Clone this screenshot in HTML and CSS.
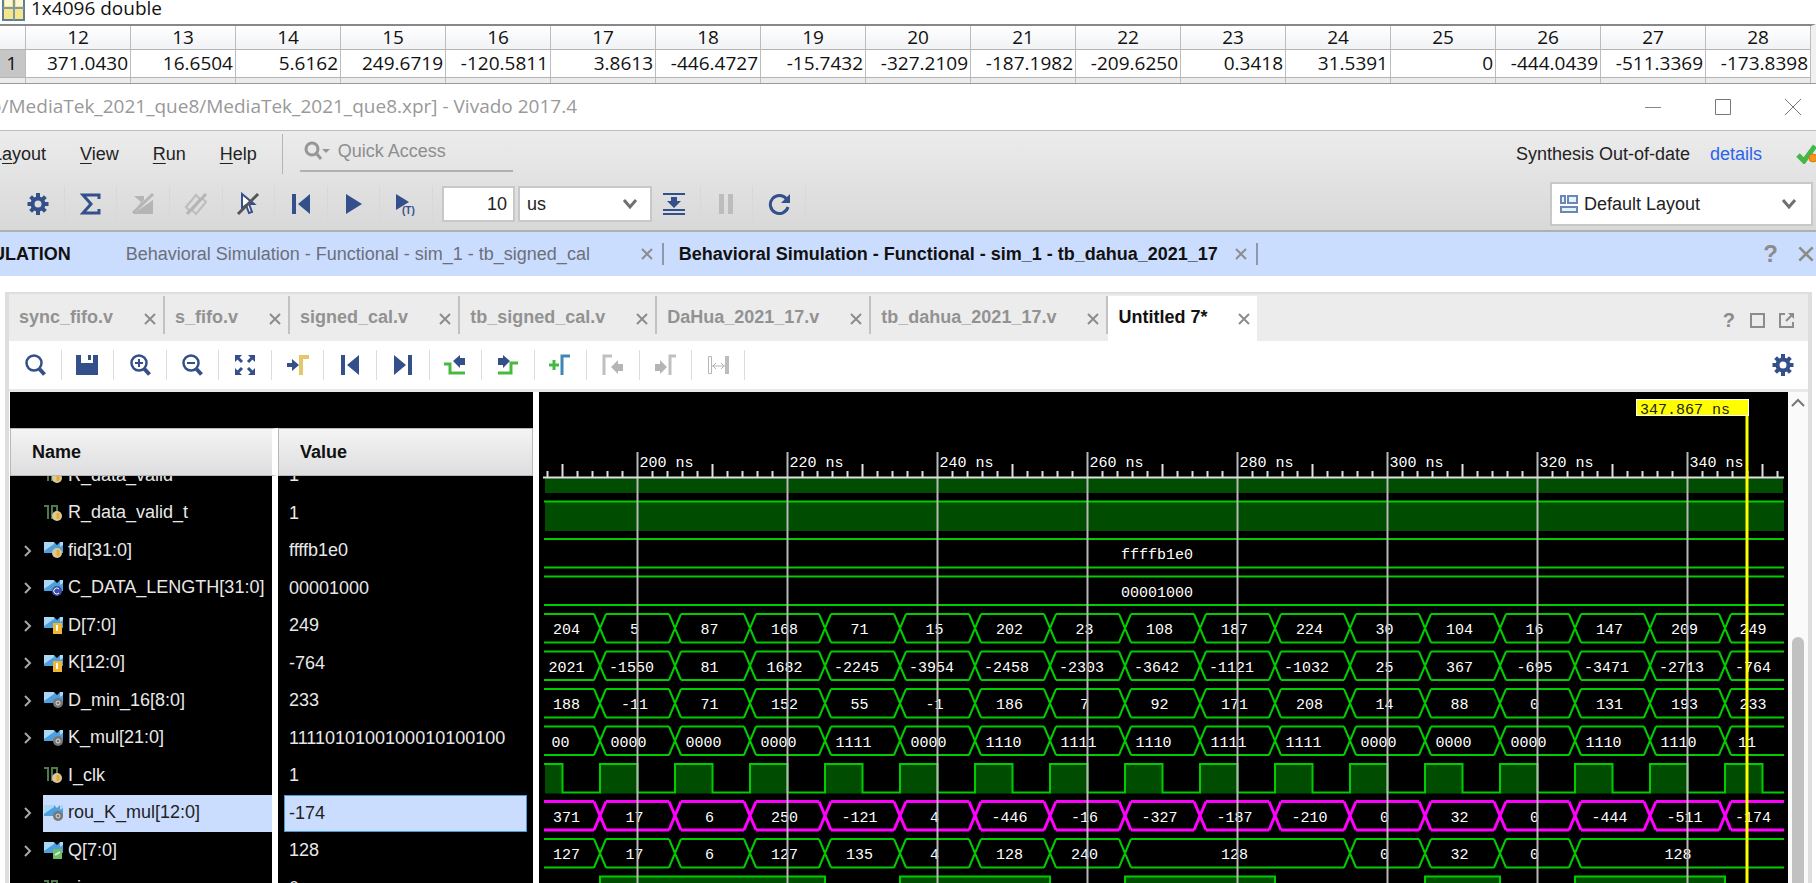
FILE: index.html
```html
<!DOCTYPE html>
<html lang="en">
<head>
    <meta charset="UTF-8">
    <meta name="viewport" content="width=device-width, initial-scale=1.0">
    <title>Vivado 2017.4</title>
    <link rel="stylesheet" href="styles.css">
</head>
<body>
<!-- Icons used more than once -->
<svg class="defs" width="0" height="0">
    <symbol id="gear" viewBox="0 0 24 24"><path fill="none" stroke="#34508a" stroke-width="4" d="M12 6.500a5.500 5.500 0 1 1 0 11a5.500 5.500 0 1 1 0-11"/><path stroke="#34508a" stroke-width="4" d="M12 1v4M12 19v4M1.500 12h4M18.500 12h4M4.600 4.600l3 3M16.400 16.400l3 3M4.600 19.400l3-3M16.400 7.600l3-3"/></symbol>
    <symbol id="close" viewBox="0 0 12 12"><path fill="none" stroke="#8c8c8c" stroke-width="2" d="M1 1l10 10M11 1L1 11"/></symbol>
    <symbol id="down" viewBox="0 0 16 12"><path fill="none" stroke="#707070" stroke-width="3" d="M2 2l6 7l6-7"/></symbol>
    <symbol id="first" viewBox="0 0 24 24"><path fill="#34508a" d="M3 2h4v20H3zM21 2v20L9 12z"/></symbol>
    <symbol id="lens" viewBox="0 0 24 24"><circle cx="11" cy="10" r="7.500" fill="none" stroke="#34508a" stroke-width="2.500"/><path stroke="#34508a" stroke-width="4" d="M16.500 16l5 5.500"/></symbol>
    <symbol id="bus" viewBox="0 0 19 18"><path fill="#4f9fdc" d="M0 1h10l3 3 3-3h3v11h-3l-3-3-3 3H0z"/><path fill="#a9d8f6" d="M0 1h10v2L0 10zM16 1h3v3l-3 2z"/></symbol>
    <symbol id="bit" viewBox="0 0 19 18"><path fill="none" stroke="#4f7a4a" stroke-width="2" d="M0 2h4v13M8 15V2h5v8"/></symbol>
</svg>

<!-- Matrix viewer -->
<section class="matrix">
    <div class="matrix-title">
        <svg width="24" height="22" viewBox="0 0 24 22"><path fill="#f6e68a" stroke="#5f7f98" stroke-width="2" d="M1-5h21v25H1z"/><path stroke="#8199a6" stroke-width="2" d="M12 0v20M1 8h21"/><path fill="#fdf8d2" d="M3 0h7v6H3zM14 0h7v6h-7z"/></svg>
        1x4096 double
    </div>
    <table class="matrix-table">
        <thead><tr id="matrixHead"><th class="corner"></th></tr></thead>
        <tbody>
            <tr id="matrixRow"><th class="row-no">1</th></tr>
            <tr id="matrixNext" class="next"><th></th></tr>
        </tbody>
    </table>
</section>

<!-- Title bar -->
<header class="titlebar">
    <div class="path"><span>o/MediaTek_2021_que8/MediaTek_2021_que8.xpr] - Vivado 2017.4</span></div>
    <div class="window-buttons">
        <button aria-label="Minimize"><svg width="16" height="16"><path stroke="#888" d="M0 8.500h16"/></svg></button>
        <button aria-label="Maximize"><svg width="16" height="16"><path fill="none" stroke="#777" d="M.5.5h15v15H.5z"/></svg></button>
        <button aria-label="Close"><svg width="16" height="16"><path stroke="#777" d="M0 0l16 16M16 0L0 16"/></svg></button>
    </div>
</header>

<!-- Menu and main toolbar -->
<div class="chrome">
    <div class="menubar">
        <nav>
            <a href="#">L<u>a</u>yout</a>
            <a href="#"><u>V</u>iew</a>
            <a href="#"><u>R</u>un</a>
            <a href="#"><u>H</u>elp</a>
        </nav>
        <label class="quick">
            <svg width="27" height="20" viewBox="0 0 27 20"><circle cx="8" cy="8" r="6" fill="none" stroke="#969696" stroke-width="3"/><path stroke="#969696" stroke-width="3" d="M12 12l5 6"/><path fill="#969696" d="M18 8h8l-4 4z"/></svg>
            <input type="text" placeholder="Quick Access" aria-label="Quick Access">
        </label>
        <div class="status">
            <span>Synthesis Out-of-date</span>
            <a href="#">details</a>
            <svg width="20" height="20" viewBox="0 0 20 20"><path fill="none" stroke="#45b649" stroke-width="5" d="M2 11l6 6L19 2"/><circle cx="17" cy="14" r="4" fill="#f7941d" stroke="#d9770a"/></svg>
        </div>
    </div>
    <div class="toolbar">
        <div class="run-tools">
            <button aria-label="Settings"><svg><use href="#gear"/></svg></button>
            <button aria-label="Sum"><svg viewBox="0 0 24 24"><path fill="none" stroke="#34508a" stroke-width="3" d="M21 7V3H5l8 9l-8 9h16v-4"/></svg></button>
            <button aria-label="Elaborate"><svg viewBox="0 0 24 24"><path fill="#b5b5b5" d="M3 4h10v4l-8 9l5-7zM2 22L22 8v14z"/><path stroke="#b5b5b5" stroke-width="3" d="M2 21L22 2"/></svg></button>
            <button aria-label="Clear marks"><svg viewBox="0 0 24 24"><path fill="none" stroke="#bdbdbd" stroke-width="2" d="M2 15L12 3l4 4L6 19zM8 18L18 6l4 4L12 22z"/><path stroke="#b5b5b5" stroke-width="3" d="M3 22L22 2"/></svg></button>
            <button aria-label="No selection"><svg viewBox="0 0 24 24"><path fill="#fff" stroke="#34508a" stroke-width="2" d="M6 2v14l4-3l3 8l3-1l-3-8h5z"/><path stroke="#555" stroke-width="3" d="M2 22L22 2"/></svg></button>
            <button aria-label="Restart"><svg><use href="#first"/></svg></button>
            <button aria-label="Run all"><svg viewBox="0 0 24 24"><path fill="#34508a" d="M4 2l16 10L4 22z"/></svg></button>
            <button aria-label="Run for time"><svg viewBox="0 0 24 24"><path fill="#34508a" d="M2 2l13 8L2 18z"/><text x="8" y="22" class="icon-text">(T)</text></svg></button>
        </div>
        <input class="run-time" type="text" value="10" aria-label="Run time">
        <div class="combo unit">
            <select aria-label="Time unit"><option>us</option><option>ns</option></select>
            <svg width="16" height="12"><use href="#down"/></svg>
        </div>
        <div class="sim-tools">
            <button aria-label="Step"><svg viewBox="0 0 24 24"><path stroke="#34508a" stroke-width="2" d="M1 2h22M1 18h22M1 22h22"/><path fill="#34508a" d="M9 5h6v4h4l-7 7l-7-7h4z"/></svg></button>
            <button aria-label="Break"><svg viewBox="0 0 24 24"><path fill="#bcbcbc" d="M5 2h5v20H5zM14 2h5v20h-5z"/></svg></button>
            <button aria-label="Relaunch"><svg viewBox="0 0 24 24"><path fill="none" stroke="#34508a" stroke-width="3" d="M19.500 7A9 9 0 1 0 21 15"/><path fill="#34508a" d="M23 2v9h-9z"/></svg></button>
        </div>
        <div class="combo layout">
            <svg width="18" height="18"><path fill="#e4f4fc" stroke="#6b87b5" stroke-width="2" d="M1 1h4v7H1zM8 1h9v7H8zM1 12h16v5H1z"/></svg>
            <select aria-label="Layout"><option>Default Layout</option></select>
            <svg width="16" height="12"><use href="#down"/></svg>
        </div>
    </div>
</div>

<!-- Simulation tabs -->
<div class="simbar">
    <b>SIMULATION</b>
    <div class="sim-tab">Behavioral Simulation - Functional - sim_1 - tb_signed_cal<button aria-label="Close tab"><svg width="12" height="12"><use href="#close"/></svg></button></div>
    <div class="sim-tab active">Behavioral Simulation - Functional - sim_1 - tb_dahua_2021_17<button aria-label="Close tab"><svg width="12" height="12"><use href="#close"/></svg></button></div>
    <div class="sim-right"><button class="help">?</button><button aria-label="Close"><svg width="16" height="16"><use href="#close"/></svg></button></div>
</div>

<main class="panel">
    <div class="file-tabs">
        <div id="fileTabs"></div>
        <div class="file-right">
            <button class="help">?</button>
            <button aria-label="Maximize"><svg width="16" height="16"><path fill="none" stroke="#8c8c8c" stroke-width="2" d="M2 2h13v13H2z"/></svg></button>
            <button aria-label="Float"><svg width="16" height="16"><path fill="none" stroke="#8c8c8c" stroke-width="2" d="M6 2H1v13h13v-5M7 9l7-7"/><path fill="#8c8c8c" d="M9 1h6v6z"/></svg></button>
        </div>
    </div>

    <!-- Wave toolbar -->
    <div class="wave-bar">
        <div class="wave-tools">
            <button aria-label="Find"><svg><use href="#lens"/></svg></button>
            <button aria-label="Save"><svg viewBox="0 0 24 24"><path fill="#34508a" d="M1 2h5v8h12V2h5v20H1z"/><path fill="#34508a" d="M13 2h3v5h-3z"/></svg></button>
            <button aria-label="Zoom in"><svg><use href="#lens"/><path stroke="#34508a" stroke-width="2" d="M7 10h8M11 6v8"/></svg></button>
            <button aria-label="Zoom out"><svg><use href="#lens"/><path stroke="#34508a" stroke-width="2" d="M7 10h8"/></svg></button>
            <button aria-label="Zoom fit"><svg viewBox="0 0 24 24"><path fill="#34508a" d="M2 2h7L2 9zM22 2v7l-7-7zM2 22v-7l7 7zM22 22h-7l7-7z"/><path stroke="#34508a" stroke-width="3" d="M4 4l5 5M20 4l-5 5M4 20l5-5M20 20l-5-5"/></svg></button>
            <button aria-label="Go to cursor"><svg viewBox="0 0 24 24"><path fill="#34508a" d="M1 10h5V6l7 6l-7 6v-4H1z"/><path fill="none" stroke="#e3c76b" stroke-width="4" d="M15 22V4h8"/></svg></button>
            <button aria-label="Go to start"><svg><use href="#first"/></svg></button>
            <button aria-label="Go to end"><svg viewBox="0 0 24 24"><path fill="#34508a" d="M17 2h4v20h-4zM3 2v20l12-10z"/></svg></button>
            <button aria-label="Previous transition"><svg viewBox="0 0 24 24"><path fill="none" stroke="#46b93f" stroke-width="3" d="M1 11h6v9h15"/><path fill="#34508a" d="M22 5v7h-5v3l-7-7l7-6v3z"/></svg></button>
            <button aria-label="Next transition"><svg viewBox="0 0 24 24"><path fill="none" stroke="#46b93f" stroke-width="3" d="M2 20h13v-10h7"/><path fill="#34508a" d="M2 5h5V2l7 6l-7 7v-3H2z"/></svg></button>
            <button aria-label="Add marker"><svg viewBox="0 0 24 24"><path stroke="#46b93f" stroke-width="3" d="M1 12h10M6 7v10"/><path fill="none" stroke="#3d87b8" stroke-width="3" d="M14 22V3h8"/></svg></button>
            <button aria-label="Previous marker"><svg viewBox="0 0 24 24"><path fill="none" stroke="#c0c0c0" stroke-width="3" d="M3 22V3h8"/><path fill="#b5b5b5" d="M22 11v7h-5v3l-7-7l7-7v4z"/></svg></button>
            <button aria-label="Next marker"><svg viewBox="0 0 24 24"><path fill="#b5b5b5" d="M1 11h5V7l7 7l-7 7v-3H1z"/><path fill="none" stroke="#c0c0c0" stroke-width="3" d="M16 22V3h6"/></svg></button>
            <button aria-label="Swap cursors"><svg viewBox="0 0 24 24"><path fill="none" stroke="#b5b5b5" stroke-width="1" d="M2.500 3.500h3v17h-3zM6 13h13M10 10l-3 3l3 3M15 10l3 3l-3 3"/><path stroke="#bcbcbc" stroke-width="4" d="M21 3v18"/></svg></button>
        </div>
        <button class="wave-settings" aria-label="Wave settings"><svg><use href="#gear"/></svg></button>
    </div>

    <div class="wave-area">
        <div class="signals">
            <div class="signal-scroll" id="signalScroll">
                <table class="signal-table">
                    <thead><tr><th class="name">Name</th><th>Value</th></tr></thead>
                    <tbody id="signalRows"></tbody>
                </table>
            </div>
        </div>
        <div class="wave-view"><svg id="wave"></svg></div>
        <div class="scrollbar">
            <svg width="14" height="10"><path fill="none" stroke="#777" stroke-width="2" d="M1 8l6-6l6 6"/></svg>
            <div class="thumb"></div>
        </div>
    </div>
</main>

<script>
    // matrix values
    const matrix = ["371.0430", "16.6504", "5.6162", "249.6719", "-120.5811", "3.8613", "-446.4727", "-15.7432", "-327.2109", "-187.1982", "-209.6250", "0.3418", "31.5391", "0", "-444.0439", "-511.3369", "-173.8398"];
    matrix.forEach((v, i) => {
        document.getElementById("matrixHead").innerHTML += `<th>${i + 12}</th>`;
        document.getElementById("matrixRow").innerHTML += `<td>${v}</td>`;
        document.getElementById("matrixNext").innerHTML += `<td></td>`;
    });

    // file tabs
    const files = ["sync_fifo.v", "s_fifo.v", "signed_cal.v", "tb_signed_cal.v", "DaHua_2021_17.v", "tb_dahua_2021_17.v", "Untitled 7*"];
    document.getElementById("fileTabs").innerHTML = files.map((f, i) =>
        `<div class="file-tab ${i === 6 ? "active" : ""}">${f}<button aria-label="Close ${f}"><svg width="12" height="12"><use href="#close"/></svg></button></div>`
    ).join("");

    // signal list: [name, value, icon, badge]
    const signals = [
        ["R_data_valid", "1", "bit", "wire"],
        ["R_data_valid_t", "1", "bit", "wire"],
        ["fid[31:0]", "ffffb1e0", "bus", "wire"],
        ["C_DATA_LENGTH[31:0]", "00001000", "bus", "const"],
        ["D[7:0]", "249", "bus", "in"],
        ["K[12:0]", "-764", "bus", "in"],
        ["D_min_16[8:0]", "233", "bus", "reg"],
        ["K_mul[21:0]", "1111010100100010100100", "bus", "reg"],
        ["I_clk", "1", "bit", "wire"],
        ["rou_K_mul[12:0]", "-174", "bus", "reg"],
        ["Q[7:0]", "128", "bus", "out"],
        ["sin", "0", "bit", "wire"]
    ];
    const badges = {
        wire: `<circle cx="13" cy="12" r="5" fill="#d9c9a0"/><path stroke="#f0a81c" stroke-width="3" d="M14 9v6"/>`,
        const: `<circle cx="13" cy="12" r="5" fill="#3c4fa8"/><path fill="none" stroke="#fff" d="M15 10a3 3 0 1 0 0 4"/>`,
        in: `<path fill="#f2b632" d="M9 7h9v11H9z"/><path stroke="#fff" stroke-width="2" d="M13 9v6"/>`,
        reg: `<circle cx="14" cy="12" r="5" fill="#777"/><circle cx="14" cy="12" r="2" fill="none" stroke="#ddd"/>`,
        out: `<path fill="#6fbf6a" d="M9 8h9v10H9z"/><path stroke="#d8f0d4" stroke-width="2" d="M11 14l5-3"/>`
    };
    document.getElementById("signalRows").innerHTML = signals.map(s => `
        <tr class="${s[0].startsWith("rou") ? "selected" : ""}">
            <td class="name"><div>
                <span class="expand">${s[2] === "bus" ? `<svg width="8" height="12"><path fill="none" stroke="#a8a8a8" stroke-width="2" d="M1 1l5 5l-5 5"/></svg>` : ""}</span>
                <span class="label"><svg width="19" height="18"><use href="#${s[2]}"/>${badges[s[3]]}</svg>${s[0]}</span>
            </div></td>
            <td class="value"><div>${s[1]}</div></td>
        </tr>`).join("");
    document.getElementById("signalScroll").scrollTop = 19;

    // waveforms
    const START = 5, END = 1245, EDGE = 61, STEP = 75;
    const ROW = 37.5, HIGH = 28.5;
    const wave = document.getElementById("wave");
    let out = "";

    function rowTop(n) {
        return 109.5 + n * ROW;
    }

    // a bit: list of [from, to] ranges where it is high
    function drawBit(n, ranges) {
        const hi = rowTop(n), lo = hi + HIGH;
        let d = "";
        let y = ranges[0][0] <= START ? hi : lo;
        d += `M${START} ${y}`;
        ranges.forEach(([a, b]) => {
            out += `<path class="fill" d="M${Math.max(a, START + 1)} ${hi}H${b}V${lo + 1}H${Math.max(a, START + 1)}z"/>`;
            if (a > START) d += `H${a}V${hi}`;
            d += `H${b}`;
            if (b < END) d += `V${lo}`;
        });
        d += `H${END}`;
        out += `<path class="line" d="${d}"/>`;
    }

    // a bus: list of [value, number of steps]
    function drawBus(n, values, cls, shift) {
        const hi = rowTop(n), lo = hi + HIGH;
        let top = `M${START} ${hi}`, bottom = `M${START} ${lo}`, cross = "", texts = "";
        let from = 0, to = EDGE;
        values.forEach(([v, steps], i) => {
            const last = i === values.length - 1;
            if (i > 0) to = from + steps * STEP;
            if (last) to = END + 3;
            const dx = shift || (v.length > 4 ? 6 : 3);
            texts += `<text x="${(from + to) / 2 - dx}" y="${hi + 20}">${v}</text>`;
            if (last) {
                top += `H${END}`;
                bottom += `H${END}`;
            } else {
                top += `H${to - 6}M${to + 6} ${hi}`;
                bottom += `H${to - 6}M${to + 6} ${lo}`;
                cross += `M${to - 6} ${hi}L${to + 6} ${lo}M${to - 6} ${lo}L${to + 6} ${hi}`;
            }
            from = to;
        });
        out += `<path class="${cls || "line"}" d="${top}${bottom}${cross}"/>${texts}`;
    }

    const each = text => text.split(" ").map(v => [v, 1]);

    out += `<path class="fill" d="M6 86H${END - 1}V101H6z"/>`;
    drawBit(0, [[0, END]]);
    drawBus(1, [["ffffb1e0", 1]]);
    drawBus(2, [["00001000", 1]]);
    drawBus(3, each("204 5 87 168 71 15 202 23 108 187 224 30 104 16 147 209 249"));
    drawBus(4, each("2021 -1550 81 1682 -2245 -3954 -2458 -2303 -3642 -1121 -1032 25 367 -695 -3471 -2713 -764"));
    drawBus(5, each("188 -11 71 152 55 -1 186 7 92 171 208 14 88 0 131 193 233"));
    drawBus(6, each("00 0000 0000 0000 1111 0000 1110 1111 1110 1111 1111 0000 0000 0000 1110 1110 11"), "line", 9);

    const clock = [[0, 23.5]];
    for (let x = EDGE; x < END; x += STEP) clock.push([x, x + STEP / 2]);
    drawBit(7, clock);
    drawBus(8, each("371 17 6 250 -121 4 -446 -16 -327 -187 -210 0 32 0 -444 -511 -174"), "line picked");
    drawBus(9, [["127", 1], ["17", 1], ["6", 1], ["127", 1], ["135", 1], ["4", 1], ["128", 1], ["240", 1], ["128", 3], ["0", 1], ["32", 1], ["0", 1], ["128", 3]]);
    drawBit(10, [[61, 286], [361, 511], [586, 736], [886, 961], [1036, 1186]]);

    // time axis, 15px for every 2 ns
    let ticks = "", grid = "";
    for (let i = -6; i * 15 + 98.5 < END; i++) {
        const x = 98.5 + i * 15;
        if (i % 10 === 0) {
            grid += `M${x} 60V2000`;
            out += `<text class="time" x="${x + 2}" y="75">${200 + i * 2} ns</text>`;
        } else {
            ticks += `M${x} ${i % 5 === 0 ? 72 : 79}V86`;
        }
    }
    out += `<path class="grid" d="${grid}"/><path class="axis" d="M4 85.500H${END}${ticks}"/>`;

    // cursor
    out += `<path class="cursor" d="M1208 20V2000"/><rect class="cursor-box" x="1097.500" y="7.500" width="112" height="16"/><text class="cursor-text" x="1101" y="22">347.867 ns</text>`;
    wave.innerHTML = out;
</script>
</body>
</html>
```
FILE: styles.css
```css
* {
  box-sizing: border-box;
}
body {
  margin: 0;
  height: 100vh;
  overflow: hidden;
  display: flex;
  flex-direction: column;
  font-family: "Liberation Sans", Arial, sans-serif;
  font-size: 18px;
  color: #222;
  background-color: #fff;
}
button {
  padding: 0;
  border: none;
  background: none;
  display: flex;
  align-items: center;
  justify-content: center;
}
svg {
  flex: none;
}
a {
  color: inherit;
  text-decoration: none;
}
input, select {
  font: inherit;
  color: inherit;
}
.defs {
  position: absolute;
}

/* matrix viewer */
.matrix, .titlebar {
  font-family: "Open Sans", "Noto Sans", sans-serif;
  font-size: 19px;
  color: #111;
  flex: none;
}
.matrix-title {
  display: flex;
  gap: 5px;
  height: 24px;
  padding-left: 2px;
  line-height: 16px;
}
.matrix {
  background-color: #fff;
  border-bottom: 1px solid #999;
}
.matrix-table {
  width: 100%;
  border-collapse: separate;
  border-spacing: 0;
  table-layout: fixed;
  border-top: 2px solid #88888c;
  border-right: 5px solid #f0f0f0;
}
.matrix-table th, .matrix-table td {
  height: 28px;
  padding: 0 2px 2px 0;
  border-right: 1px solid #bcbcbc;
  border-bottom: 1px solid #b4b4b4;
  font-weight: normal;
  line-height: 24px;
  text-align: right;
}
.matrix-table thead th {
  height: 24px;
  padding: 0;
  line-height: 23px;
  text-align: center;
  background: linear-gradient(#fff, #f1f2f5);
}
.matrix-table .corner {
  width: 26px;
}
.matrix-table .row-no {
  padding-right: 8px;
  background-color: #c6c6c6;
}
.matrix-table .next th, .matrix-table .next td {
  height: 5px;
  border-bottom: none;
  background-color: #ececec;
}

/* title bar */
.titlebar {
  display: flex;
  justify-content: space-between;
  align-items: center;
  height: 47px;
  border-bottom: 1px solid #bdbdbd;
  color: #999;
}
.path {
  display: flex;
  justify-content: flex-end;
  width: 577px;
  padding-bottom: 2px;
  white-space: nowrap;
}
.window-buttons {
  display: flex;
  gap: 54px;
  padding-right: 15px;
}

/* menu and toolbar */
.chrome {
  flex: none;
  height: 101px;
  background: linear-gradient(#ececec, #d8d8d8);
  border-bottom: 2px solid #b0b0b0;
}
.menubar {
  display: flex;
  align-items: center;
  height: 46px;
}
.menubar nav {
  display: flex;
  align-items: center;
  gap: 34px;
  height: 40px;
  margin-left: -8px;
  padding-right: 25px;
  border-right: 1px solid #b4b4b4;
}
.menubar u {
  text-underline-offset: 3px;
}
.quick {
  display: flex;
  align-items: center;
  gap: 7px;
  width: 213px;
  height: 36px;
  margin-left: 17px;
  padding: 0 0 4px 4px;
  border-bottom: 2px solid #b0b0b0;
}
.quick input {
  width: 160px;
  padding: 0;
  border: none;
  background: none;
}
.quick input::placeholder {
  color: #8e8e8e;
}
.status {
  display: flex;
  align-items: center;
  gap: 20px;
  margin-left: auto;
}
.status a {
  margin-right: 14px;
  color: #2c63ea;
}
.toolbar {
  display: flex;
  align-items: center;
  height: 53px;
  padding: 1px 3px 0 12px;
}
.run-tools, .sim-tools, .wave-tools {
  display: grid;
  grid-auto-flow: column;
  grid-auto-columns: 1fr;
}
.run-tools {
  width: 421px;
  margin-right: 9px;
}
.sim-tools {
  width: 158px;
  margin-left: -4px;
}
.run-tools button, .sim-tools button {
  height: 36px;
  border-right: 1px solid #d8d8d8;
}
.run-tools svg, .sim-tools svg, .wave-tools svg, .wave-settings svg {
  width: 24px;
  height: 24px;
}
.icon-text {
  font-size: 10px;
  font-weight: bold;
  fill: #34508a;
}
.run-time {
  width: 73px;
  height: 36px;
  margin-right: 3px;
  padding: 0 6px;
  border: 2px solid #c8c8c8;
  background-color: #fff;
  text-align: right;
}
.combo {
  display: flex;
  align-items: center;
  border: 2px solid #c8c8c8;
  background-color: #fff;
}
.combo select {
  flex: 1;
  padding: 0;
  border: none;
  background: none;
  appearance: none;
}
.unit {
  width: 134px;
  height: 36px;
  padding: 0 12px 0 7px;
}
.layout {
  gap: 6px;
  width: 263px;
  height: 44px;
  margin-left: auto;
  padding: 0 14px 0 8px;
}

/* simulation tabs */
.simbar {
  display: flex;
  align-items: center;
  flex: none;
  height: 44px;
  background-color: #cbddfe;
  white-space: nowrap;
}
.simbar b {
  margin-left: -40px;
  padding-right: 55px;
  color: #111;
}
.sim-tab {
  display: flex;
  align-items: center;
  justify-content: space-between;
  width: 538px;
  height: 22px;
  padding-right: 9px;
  border-right: 2px solid #8d98aa;
  color: #6b6f7a;
}
.sim-tab.active {
  width: 594px;
  padding-left: 15px;
  font-weight: bold;
  color: #111;
}
.sim-right {
  display: flex;
  align-items: center;
  gap: 20px;
  margin-left: auto;
  padding-right: 2px;
}
.help {
  font: bold 24px "Liberation Sans", Arial, sans-serif;
  color: #8c8c8c;
}

/* wave panel */
.panel {
  display: flex;
  flex-direction: column;
  flex: 1;
  min-height: 0;
  margin: 16px 4px 0 5px;
  border: solid #dedede;
  border-width: 2px 4px 0 4px;
}
.file-tabs {
  display: flex;
  justify-content: space-between;
  flex: none;
  height: 47px;
  padding-top: 2px;
  background-color: #ececec;
}
#fileTabs {
  display: flex;
  font-weight: bold;
  color: #929292;
}
.file-tab {
  display: flex;
  align-items: center;
  gap: 31px;
  height: 38px;
  padding: 4px 7px 0 10px;
  border-right: 2px solid #c2c2c2;
}
.file-tab.active {
  height: 45px;
  padding-bottom: 7px;
  border-right: none;
  background-color: #fff;
  color: #111;
}
.file-tab button {
  padding-top: 3px;
}
.file-right {
  display: flex;
  align-items: center;
  gap: 14px;
  padding: 3px 13px 0 0;
}
.file-right .help {
  font-size: 20px;
}
.wave-bar {
  display: flex;
  justify-content: space-between;
  align-items: center;
  flex: none;
  height: 51px;
  padding-right: 13px;
  border-bottom: 3px solid #e8e8e8;
}
.wave-tools {
  width: 736px;
}
.wave-tools button {
  height: 30px;
  border-right: 1px solid #dcdcdc;
}
.wave-area {
  display: flex;
  flex: 1;
  min-height: 0;
  padding-left: 1px;
}
.signals {
  display: flex;
  flex-direction: column;
  width: 523px;
  padding-top: 36px;
  background-color: #000;
}
.signal-scroll {
  flex: 1;
  min-height: 0;
  overflow: hidden;
}
.signal-table {
  width: 100%;
  table-layout: fixed;
  border-collapse: separate;
  border-spacing: 0;
  color: #e8e8e8;
}
.signal-table th {
  position: sticky;
  top: 0;
  z-index: 1;
  height: 48px;
  padding: 0 0 0 21px;
  border: 1px solid #b8b8b8;
  background: linear-gradient(#f4f4f4, #dedee0);
  color: #111;
  text-align: left;
}
.signal-table .name {
  width: 268px;
  border-right: 6px solid #fff;
}
.signal-table td {
  height: 37px;
  padding: 0;
}
.signal-table tr:nth-child(even) td {
  height: 38px;
}
.name div {
  display: flex;
  height: 37px;
  white-space: nowrap;
}
.expand {
  display: flex;
  align-items: center;
  width: 33px;
  padding-left: 14px;
}
.label {
  display: flex;
  align-items: center;
  flex: 1;
  gap: 5px;
  padding: 0 0 1px 1px;
}
.value div {
  height: 37px;
  margin: 0 6px;
  padding-left: 5px;
  line-height: 36px;
}
.selected .label {
  background-color: #cbddfe;
  color: #222;
}
.selected .value div {
  border: 1px solid #4a9ad4;
  padding-left: 4px;
  line-height: 34px;
  background-color: #cbddfe;
  color: #222;
}
.wave-view {
  flex: 1;
  min-width: 0;
  margin-left: 6px;
  overflow: hidden;
  background-color: #000;
}
#wave {
  display: block;
  width: 100%;
  height: 100%;
}
#wave text {
  font-family: "Liberation Mono", monospace;
  font-size: 15px;
  fill: #fff;
  text-anchor: middle;
}
#wave .time, #wave .cursor-text {
  text-anchor: start;
}
#wave .cursor-text {
  fill: #222;
}
.fill {
  fill: #004c00;
}
.line {
  fill: none;
  stroke: #00cc00;
  stroke-width: 2px;
}
.picked {
  stroke: #f0f;
  stroke-width: 3px;
}
.grid {
  stroke: #b8b8b8;
  stroke-width: 2px;
}
.axis {
  stroke: #e0e0e0;
  stroke-width: 2px;
}
.cursor {
  stroke: #ff0;
  stroke-width: 3px;
}
.cursor-box {
  fill: #ff0;
  stroke: #fff;
}
.scrollbar {
  display: flex;
  flex-direction: column;
  align-items: center;
  gap: 229px;
  width: 20px;
  padding-top: 6px;
  background-color: #fafafa;
}
.thumb {
  flex: 1;
  width: 12px;
  border-radius: 6px 6px 0 0;
  background-color: #c1c1c1;
}
```
